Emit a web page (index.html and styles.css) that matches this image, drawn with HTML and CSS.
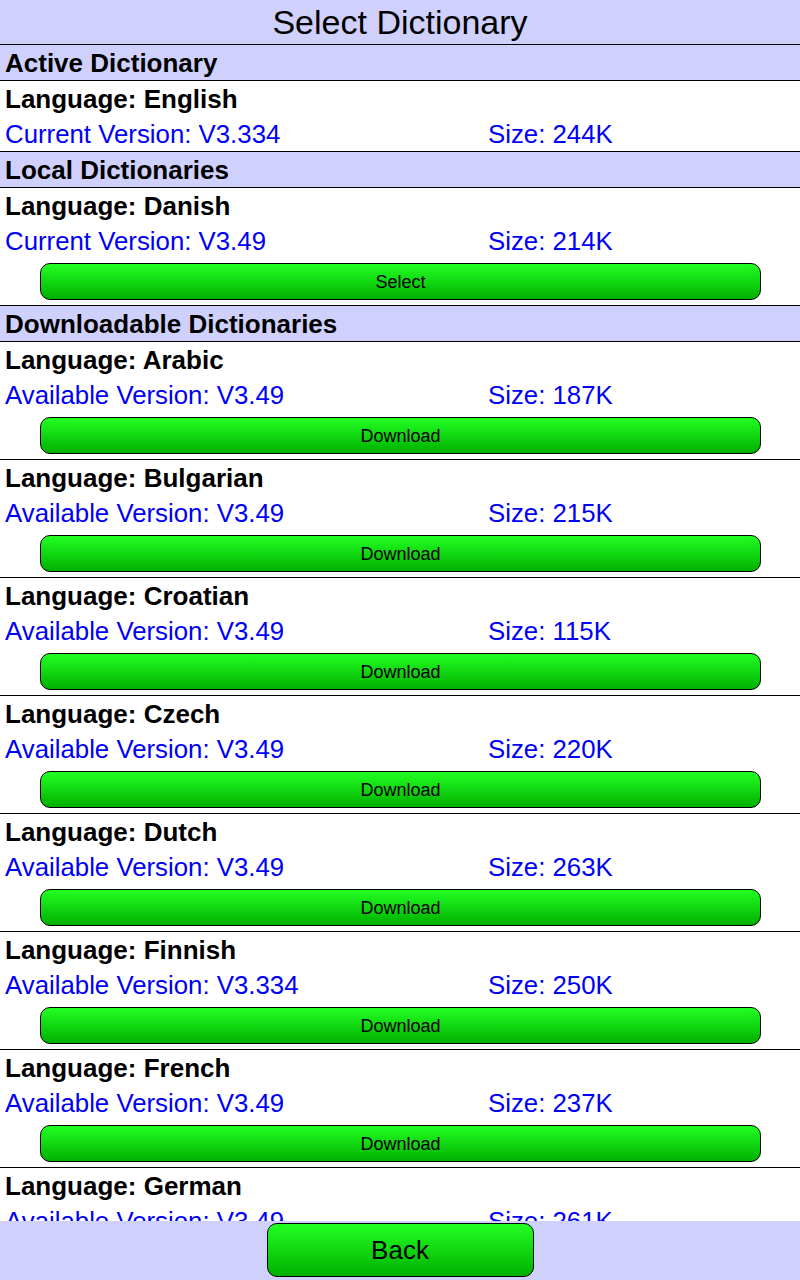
FILE: index.html
```html
<!DOCTYPE html>
<html>
<head>
<meta charset="utf-8">
<link rel="stylesheet" href="styles.css">
</head>
<body>
<div class="screen">
  <div class="title">Select Dictionary</div>
  <div class="list">
    <div class="section">Active Dictionary</div>
    <div class="item">
      <div class="lang">Language: English</div>
      <div class="info"><span>Current Version: V3.334</span><span>Size: 244K</span></div>
    </div>
    <div class="section">Local Dictionaries</div>
    <div class="item">
      <div class="lang">Language: Danish</div>
      <div class="info"><span>Current Version: V3.49</span><span>Size: 214K</span></div>
      <div class="btn">Select</div>
    </div>
    <div class="section">Downloadable Dictionaries</div>
    <div class="item">
      <div class="lang">Language: Arabic</div>
      <div class="info"><span>Available Version: V3.49</span><span>Size: 187K</span></div>
      <div class="btn">Download</div>
    </div>
    <div class="item">
      <div class="lang">Language: Bulgarian</div>
      <div class="info"><span>Available Version: V3.49</span><span>Size: 215K</span></div>
      <div class="btn">Download</div>
    </div>
    <div class="item">
      <div class="lang">Language: Croatian</div>
      <div class="info"><span>Available Version: V3.49</span><span>Size: 115K</span></div>
      <div class="btn">Download</div>
    </div>
    <div class="item">
      <div class="lang">Language: Czech</div>
      <div class="info"><span>Available Version: V3.49</span><span>Size: 220K</span></div>
      <div class="btn">Download</div>
    </div>
    <div class="item">
      <div class="lang">Language: Dutch</div>
      <div class="info"><span>Available Version: V3.49</span><span>Size: 263K</span></div>
      <div class="btn">Download</div>
    </div>
    <div class="item">
      <div class="lang">Language: Finnish</div>
      <div class="info"><span>Available Version: V3.334</span><span>Size: 250K</span></div>
      <div class="btn">Download</div>
    </div>
    <div class="item">
      <div class="lang">Language: French</div>
      <div class="info"><span>Available Version: V3.49</span><span>Size: 237K</span></div>
      <div class="btn">Download</div>
    </div>
    <div class="item">
      <div class="lang">Language: German</div>
      <div class="info"><span>Available Version: V3.49</span><span>Size: 261K</span></div>
      <div class="btn">Download</div>
    </div>
  </div>
  <div class="bottom">
    <div class="back">Back</div>
  </div>
</div>
</body>
</html>
```
FILE: styles.css
```css
html, body {
  margin: 0;
  padding: 0;
  background: #ffffff;
}
body {
  font-family: "Liberation Sans", Arial, sans-serif;
  color: #000;
}
.screen {
  width: 800px;
  height: 1280px;
  display: flex;
  flex-direction: column;
  overflow: hidden;
}
.title {
  height: 44px;
  line-height: 44px;
  background: #d0d0fc;
  border-bottom: 1px solid #000;
  text-align: center;
  font-size: 34px;
  flex: none;
}
.list {
  flex: 1;
  overflow: hidden;
  background: #fff;
}
.section {
  height: 34px;
  padding-top: 1px;
  line-height: 35px;
  background: #d0d0fc;
  border-bottom: 1px solid #000;
  padding-left: 5px;
  font-weight: bold;
  font-size: 26px;
}
.item {
  border-bottom: 1px solid #000;
}
.lang {
  height: 34px;
  padding-top: 1px;
  line-height: 35px;
  padding-left: 5px;
  font-weight: bold;
  font-size: 26px;
}
.info {
  height: 34px;
  padding-top: 1px;
  line-height: 35px;
  padding-left: 5px;
  display: grid;
  grid-template-columns: 483px 1fr;
  color: #0000f8;
  font-size: 25.8px;
}
.btn {
  margin: 5px 39px 5px 40px;
  height: 34px;
  padding-top: 1px;
  line-height: 35px;
  border: 1px solid #000;
  border-radius: 10px;
  background: linear-gradient(#22ff22, #00b000);
  text-align: center;
  font-size: 18px;
}
.bottom {
  height: 59px;
  flex: none;
  background: #d0d0fc;
  display: flex;
  justify-content: center;
  padding-top: 2px;
  box-sizing: border-box;
}
.back {
  width: 267px;
  height: 54px;
  box-sizing: border-box;
  line-height: 52px;
  border: 1px solid #000;
  border-radius: 10px;
  background: linear-gradient(#22ff22, #00b000);
  text-align: center;
  font-size: 26px;
}
```
